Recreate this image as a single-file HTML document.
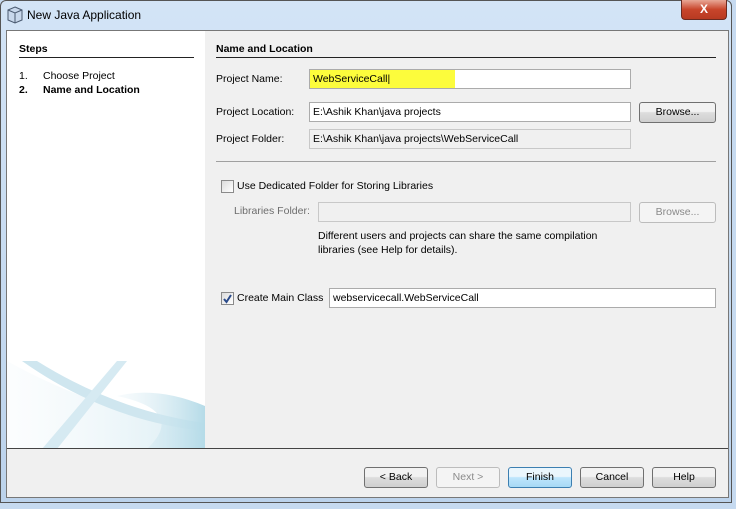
<!DOCTYPE html>
<html><head><style>
*{margin:0;padding:0;box-sizing:border-box}
body{width:736px;height:509px;overflow:hidden;background:#c6daf0;font-family:"Liberation Sans","DejaVu Sans",sans-serif;font-size:10.5px;color:#000;position:relative}
.frame{position:absolute;left:0;top:0;width:732px;height:503px;background:linear-gradient(#d3e4f6,#bcd3ec);border:1px solid #555;border-radius:6px 6px 0 0}
.title{position:absolute;left:27px;top:8px;font-size:12px;color:#000}
.close{position:absolute;left:681px;top:0;width:46px;height:20px;background:linear-gradient(#e8a796,#c8452b 50%,#b83a22);border:1px solid #6b2a20;border-top:none;border-radius:0 0 4px 4px;color:#fff;font-weight:bold;text-align:center;font-size:12px;line-height:18px}
.content{position:absolute;left:6px;top:30px;width:723px;height:468px;background:#f0f0f0;border:1px solid #777}
.steps{position:absolute;left:0;top:0;width:198px;height:418px;background:#fff;overflow:hidden}
.sep{position:absolute;left:0;top:417px;width:721px;height:1px;background:#444}
.a{position:absolute;white-space:nowrap}
.hr{position:absolute;height:1px;background:#222}
.tf{position:absolute;height:20px;background:#fff;border:1px solid #ababab;padding:3px 3px;white-space:nowrap}
.dis{background:#f0f0f0;border-color:#c8c8c8}
.btn{position:absolute;height:21px;border:1px solid #707070;border-radius:3px;background:linear-gradient(#f2f2f2 45%,#dddddd 50%,#cfcfcf);text-align:center;line-height:19px}
.cb{position:absolute;width:13px;height:13px;border:1px solid #8a8a8a;background:linear-gradient(135deg,#dcdcdc,#fff)}
</style></head><body>
<div class="frame"></div>
<svg style="position:absolute;left:7px;top:6px" width="16" height="18" viewBox="0 0 16 18"><path d="M8 1 L15 4 L15 14 L8 17 L1 14 L1 4 Z" fill="#c8d8ec" stroke="#4a5a70"/><path d="M1 4 L8 7 L15 4 M8 7 L8 17" fill="none" stroke="#4a5a70"/></svg>
<div class="title">New Java Application</div>
<div class="close">X</div>
<div class="content">
 <div class="steps">
  <svg style="position:absolute;left:0;top:320px" width="198" height="98" viewBox="0 0 198 98">
   <defs><linearGradient id="g" x1="0" x2="1"><stop offset="0" stop-color="#e8f3f8" stop-opacity=".3"/><stop offset="1" stop-color="#b5dbe8"/></linearGradient></defs>
   <path d="M0 10 Q90 60 198 80 L198 98 L0 98 Z" fill="url(#g)" opacity=".5"/>
   <path d="M15 10 L30 10 Q110 60 198 72 L198 80 Q100 70 15 10Z" fill="#cfe6ef"/>
   <path d="M110 10 L120 10 L50 98 L35 98 Z" fill="#d6eaf2"/>
   <path d="M110 45 Q150 35 198 55 L198 98 L140 98 Q180 60 110 45Z" fill="url(#g)"/>
  </svg>
  <div class="a" style="left:12px;top:12px;font-weight:bold">Steps</div>
  <div class="hr" style="left:12px;top:26px;width:175px"></div>
  <div class="a" style="left:12px;top:39px">1.</div><div class="a" style="left:36px;top:39px">Choose Project</div>
  <div class="a" style="left:12px;top:53px;font-weight:bold">2.</div><div class="a" style="left:36px;top:53px;font-weight:bold">Name and Location</div>
 </div>
 <div class="a" style="left:209px;top:12px;font-weight:bold">Name and Location</div>
 <div class="hr" style="left:209px;top:26px;width:500px"></div>
 <div class="a" style="left:209px;top:42px">Project Name:</div>
 <div class="tf" style="left:302px;top:38px;width:322px"><span style="background:#fcfc3c;position:absolute;left:0;top:0;width:145px;height:18px"></span><span style="position:relative">WebServiceCall|</span></div>
 <div class="a" style="left:209px;top:75px">Project Location:</div>
 <div class="tf" style="left:302px;top:71px;width:322px">E:\Ashik Khan\java projects</div>
 <div class="btn" style="left:632px;top:71px;width:77px">Browse...</div>
 <div class="a" style="left:209px;top:102px">Project Folder:</div>
 <div class="tf dis" style="left:302px;top:98px;width:322px">E:\Ashik Khan\java projects\WebServiceCall</div>
 <div class="hr" style="left:209px;top:130px;width:500px;background:#a0a0a0"></div>
 <div class="cb" style="left:214px;top:149px"></div>
 <div class="a" style="left:230px;top:149px">Use Dedicated Folder for Storing Libraries</div>
 <div class="a" style="left:227px;top:174px;color:#6d6d6d">Libraries Folder:</div>
 <div class="tf dis" style="left:311px;top:171px;width:313px"></div>
 <div class="btn" style="left:632px;top:171px;width:77px;color:#8a8a8a;border-color:#bcbcbc;background:#f4f4f4">Browse...</div>
 <div class="a" style="left:311px;top:199px">Different users and projects can share the same compilation</div>
 <div class="a" style="left:311px;top:213px">libraries (see Help for details).</div>
 <div class="cb" style="left:214px;top:261px"><svg width="11" height="11" style="position:absolute;left:0;top:0"><path d="M2 6 L4.5 9 L9 2" fill="none" stroke="#2a4a8a" stroke-width="2"/></svg></div>
 <div class="a" style="left:230px;top:261px">Create Main Class</div>
 <div class="tf" style="left:322px;top:257px;width:387px">webservicecall.WebServiceCall</div>
 <div class="sep"></div>
 <div class="btn" style="left:357px;top:436px;width:64px">&lt; Back</div>
 <div class="btn" style="left:429px;top:436px;width:64px;color:#8a8a8a;border-color:#bcbcbc;background:#f4f4f4">Next &gt;</div>
 <div class="btn" style="left:501px;top:436px;width:64px;border-color:#3c7fb1;background:linear-gradient(#eaf6fd 45%,#bee6fd 50%,#a7d9f5)">Finish</div>
 <div class="btn" style="left:573px;top:436px;width:64px">Cancel</div>
 <div class="btn" style="left:645px;top:436px;width:64px">Help</div>
</div>
</body></html>
